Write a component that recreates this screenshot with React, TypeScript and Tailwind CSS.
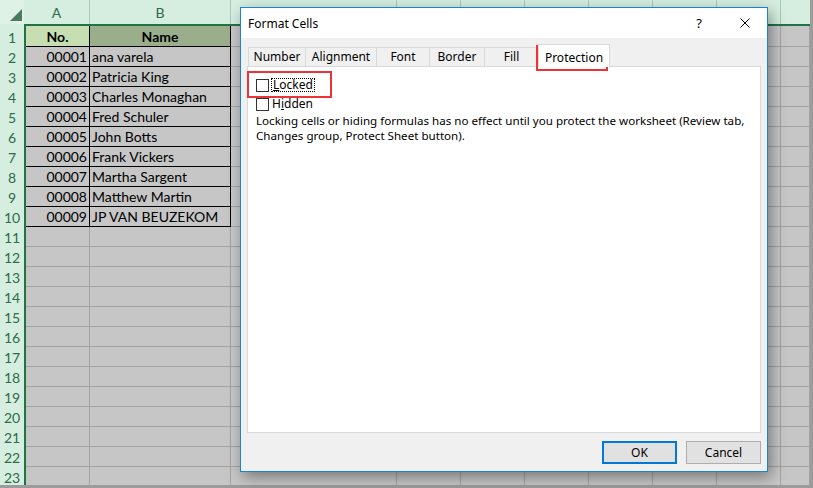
import React from "react";

const people = [
  ["00001", "ana varela"],
  ["00002", "Patricia King"],
  ["00003", "Charles Monaghan"],
  ["00004", "Fred Schuler"],
  ["00005", "John Botts"],
  ["00006", "Frank Vickers"],
  ["00007", "Martha Sargent"],
  ["00008", "Matthew Martin"],
  ["00009", "JP VAN BEUZEKOM"],
];

const COLS = 10;
const ROWS = 23;

function Cell({ r, c }: { r: number; c: number }) {
  const inTable = r < 10 && c < 2;
  const border = inTable ? "border-black" : "border-[#a3a3a3]";
  let bg = "bg-[#c6c6c6]";
  let content: React.ReactNode = null;
  let align = "justify-start pl-[2px]";

  if (r === 0 && c === 0) {
    bg = "bg-[#c6deb2]";
    content = <span className="font-bold">No.</span>;
    align = "justify-center";
  } else if (r === 0 && c === 1) {
    bg = "bg-[#9bae8b]";
    content = <span className="font-bold">Name</span>;
    align = "justify-center";
  } else if (r > 0 && r < 10 && c === 0) {
    content = people[r - 1][0];
    align = "justify-end pr-[2px]";
  } else if (r > 0 && r < 10 && c === 1) {
    content = people[r - 1][1];
  }

  return (
    <div
      className={`flex items-end pb-[1px] leading-[16px] overflow-hidden whitespace-nowrap border-r border-b ${border} ${bg} ${align}`}
    >
      {content}
    </div>
  );
}

function Sheet() {
  return (
    <div className="w-[810px] h-[485px] overflow-hidden bg-[#c6c6c6] font-['Lato',sans-serif] text-[14px] text-black">
      {/* column headers */}
      <div className="flex h-[24px] bg-[#d5eedf]">
        <div className="w-[24px] h-full flex items-end justify-end pr-[2px] pb-[3px] bg-[#dff2e6]">
          <svg width="12" height="12" viewBox="0 0 12 12">
            <polygon points="12,0 12,12 0,12" fill="#4a7a60" />
          </svg>
        </div>
        <div className="grid grid-cols-[66px_141px_166px_repeat(6,64px)_29px] leading-[16px] text-[#2f6a4a]">
          <div className="flex items-end pb-[3px] justify-center border-r border-[#a9c9b6]">A</div>
          <div className="flex items-end pb-[3px] justify-center border-r border-[#a9c9b6]">B</div>
          <div className="border-r border-[#a9c9b6]" />
          <div className="border-r border-[#a9c9b6]" />
          <div className="border-r border-[#a9c9b6]" />
          <div className="border-r border-[#a9c9b6]" />
          <div className="border-r border-[#a9c9b6]" />
          <div className="border-r border-[#a9c9b6]" />
          <div className="border-r border-[#a9c9b6]" />
          <div />
        </div>
      </div>

      <div className="flex">
        {/* row numbers */}
        <div className="w-[24px] flex flex-col bg-[#d5eedf] text-[#2f6a4a] leading-[16px]">
          {Array.from({ length: ROWS }).map((_, i) => (
            <div
              key={i}
              className={`flex items-end justify-center pb-[1px] ${i === 0 ? "h-[23px]" : "h-[20px]"}`}
            >
              {i + 1}
            </div>
          ))}
        </div>

        {/* cells */}
        <div className="border-t-2 border-l-2 border-[#217346] grid grid-cols-[64px_141px_166px_repeat(6,64px)_29px] grid-rows-[21px_repeat(22,20px)]">
          {Array.from({ length: ROWS }).map((_, r) =>
            Array.from({ length: COLS }).map((_, c) => <Cell key={`${r}-${c}`} r={r} c={c} />)
          )}
        </div>
      </div>
    </div>
  );
}

function Tab({ label, w }: { label: string; w: string }) {
  return (
    <div className={`${w} h-[19px] flex items-end pb-[2px] justify-center border-t border-l border-[#d9d9d9]`}>
      {label}
    </div>
  );
}

function Checkbox() {
  return <span className="w-[13px] h-[13px] border border-[#333333] bg-white shrink-0" />;
}

function FormatCells() {
  return (
    <div className="absolute left-[240px] top-[7px] w-[528px] h-[465px] border border-[#1883d7] bg-[#f0f0f0] shadow-[3px_5px_14px_rgba(0,0,0,0.4)] flex flex-col font-['Segoe_UI','Noto_Sans',sans-serif] text-[12px] leading-[15px] text-black">
      <div className="h-[30px] bg-white flex items-center pl-[7px]">
        <span>Format Cells</span>
        <span className="ml-auto text-[13px]">?</span>
        <svg className="ml-[38px] mr-[17px]" width="10" height="10" viewBox="0 0 10 10">
          <path d="M0.5 0.5 L9.5 9.5 M9.5 0.5 L0.5 9.5" stroke="#000" strokeWidth="1" />
        </svg>
      </div>

      <div className="flex-1 flex flex-col px-[6px] pt-[6px]">
        <div className="flex items-end h-[22px] pl-px">
          <Tab label="Number" w="w-[57px]" />
          <Tab label="Alignment" w="w-[71px]" />
          <Tab label="Font" w="w-[53px]" />
          <Tab label="Border" w="w-[55px]" />
          <Tab label="Fill" w="w-[54px]" />
          <div className="relative z-10 w-[72px] h-[23px] -mb-px flex items-end pb-[2px] justify-center bg-white border border-b-0 border-[#d9d9d9]">
            Protection
          </div>
        </div>

        <div className="h-[367px] bg-white border border-[#d9d9d9] pl-[8px] pt-[10px] flex flex-col">
          <div className="flex items-center gap-[2px] h-[16px]">
            <Checkbox />
            <span className="border border-dotted border-black px-[1px] leading-[12px]">
              <span className="underline">L</span>ocked
            </span>
          </div>
          <div className="flex items-center gap-[3px] h-[16px] mt-[3px]">
            <Checkbox />
            <span className="leading-[12px]">
              H<span className="underline">i</span>dden
            </span>
          </div>
          <div className="mt-[1px] text-[11.6px] leading-[15px] whitespace-nowrap">
            <div>Locking cells or hiding formulas has no effect until you protect the worksheet (Review tab,</div>
            <div>Changes group, Protect Sheet button).</div>
          </div>
        </div>

        <div className="flex justify-end gap-[9px] mt-[8px]">
          <button className="w-[75px] h-[23px] bg-[#e1e1e1] border-2 border-[#0078d7]">OK</button>
          <button className="w-[75px] h-[23px] bg-[#e1e1e1] border border-[#adadad]">Cancel</button>
        </div>
      </div>

      {/* highlight boxes */}
      <div className="absolute left-[6px] top-[63px] w-[85px] h-[27px] border-2 border-[#ec3338]" />
      <div className="absolute left-[295px] top-[37px] w-[72px] h-[26px] border-2 border-[#ec3338]" />
    </div>
  );
}

export default function App() {
  return (
    <div className="relative w-[813px] h-[488px] overflow-hidden bg-[#9b9b9b]">
      <Sheet />
      <FormatCells />
    </div>
  );
}
